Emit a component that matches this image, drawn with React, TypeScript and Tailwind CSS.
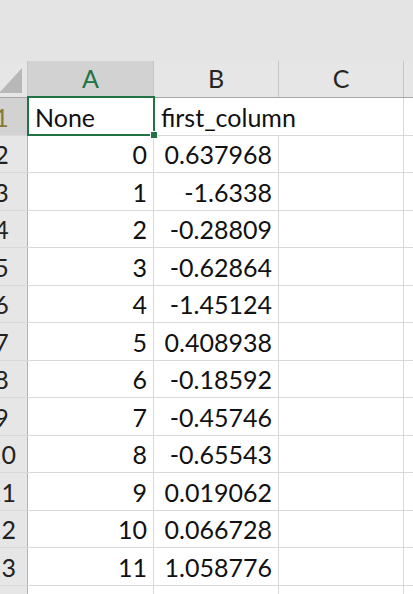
import React from "react";

// sheet data, row 1 is the header row of the frame
const rows = [
  { idx: "0", val: "0.637968" },
  { idx: "1", val: "-1.6338" },
  { idx: "2", val: "-0.28809" },
  { idx: "3", val: "-0.62864" },
  { idx: "4", val: "-1.45124" },
  { idx: "5", val: "0.408938" },
  { idx: "6", val: "-0.18592" },
  { idx: "7", val: "-0.45746" },
  { idx: "8", val: "-0.65543" },
  { idx: "9", val: "0.019062" },
  { idx: "10", val: "0.066728" },
  { idx: "11", val: "1.058776" },
  { idx: "", val: "" },
];

const font = { fontFamily: "Lato, 'Open Sans', sans-serif" };

export default function App() {
  return (
    <div
      className="w-[413px] h-[594px] overflow-hidden bg-white text-[25px] text-[#111]"
      style={font}
    >
      {/* blank ribbon area */}
      <div className="h-[61px] bg-[#e4e4e4]" />

      <div className="flex flex-col -ml-[24px]">
        {/* column headers */}
        <div className="flex h-[37px] bg-[#e6e6e6] border-b border-[#a6a6a6]">
          <div className="w-[52px] shrink-0 flex items-end justify-end pr-[5px] pb-[4px] border-r border-[#c6c6c6]">
            <div className="w-0 h-0 border-l-[23px] border-l-transparent border-b-[25px] border-b-[#b8b8b8]" />
          </div>
          <div className="w-[126px] shrink-0 flex items-center justify-center bg-[#d2d2d2] text-[#217346] border-r border-[#c6c6c6]">
            A
          </div>
          <div className="w-[125px] shrink-0 flex items-center justify-center text-[#262626] border-r border-[#c6c6c6]">
            B
          </div>
          <div className="w-[125px] shrink-0 flex items-center justify-center text-[#262626] border-r border-[#c6c6c6]">
            C
          </div>
          <div className="w-[125px] shrink-0" />
        </div>

        {/* row 1 */}
        <div className="flex h-[37.5px] border-b border-[#d9d9d9]">
          <div className="w-[52px] shrink-0 flex items-center justify-center pt-[2px] bg-[#d2d2d2] text-[#8a7a35] border-r border-[#b3b3b3]">
            1
          </div>
          <div className="relative w-[126px] shrink-0 flex items-center pl-[7px] pt-[2px] border-r border-[#d9d9d9]">
            None
            <div className="absolute -left-[1px] -top-[2px] -right-[2px] -bottom-[1px] border-2 border-[#217346]">
              <div className="absolute -right-[5px] -bottom-[5px] w-[8px] h-[8px] bg-[#217346] border border-white" />
            </div>
          </div>
          <div className="relative z-10 w-[125px] shrink-0 flex items-center pl-[7px] pt-[2px] whitespace-nowrap">
            first_column
          </div>
          <div className="w-[125px] shrink-0 border-r border-[#d9d9d9]" />
          <div className="w-[125px] shrink-0" />
        </div>

        {rows.map((r, i) => (
          <div key={i} className="flex h-[37.5px] border-b border-[#d9d9d9]">
            <div className="w-[52px] shrink-0 flex items-center justify-center pt-[2px] bg-[#e6e6e6] text-[#222] border-r border-[#b3b3b3]">
              {i + 2}
            </div>
            <div className="w-[126px] shrink-0 flex items-center justify-end pr-[6px] pt-[2px] border-r border-[#d9d9d9]">
              {r.idx}
            </div>
            <div className="w-[125px] shrink-0 flex items-center justify-end pr-[6px] pt-[2px] border-r border-[#d9d9d9]">
              {r.val}
            </div>
            <div className="w-[125px] shrink-0 border-r border-[#d9d9d9]" />
            <div className="w-[125px] shrink-0" />
          </div>
        ))}
      </div>
    </div>
  );
}
